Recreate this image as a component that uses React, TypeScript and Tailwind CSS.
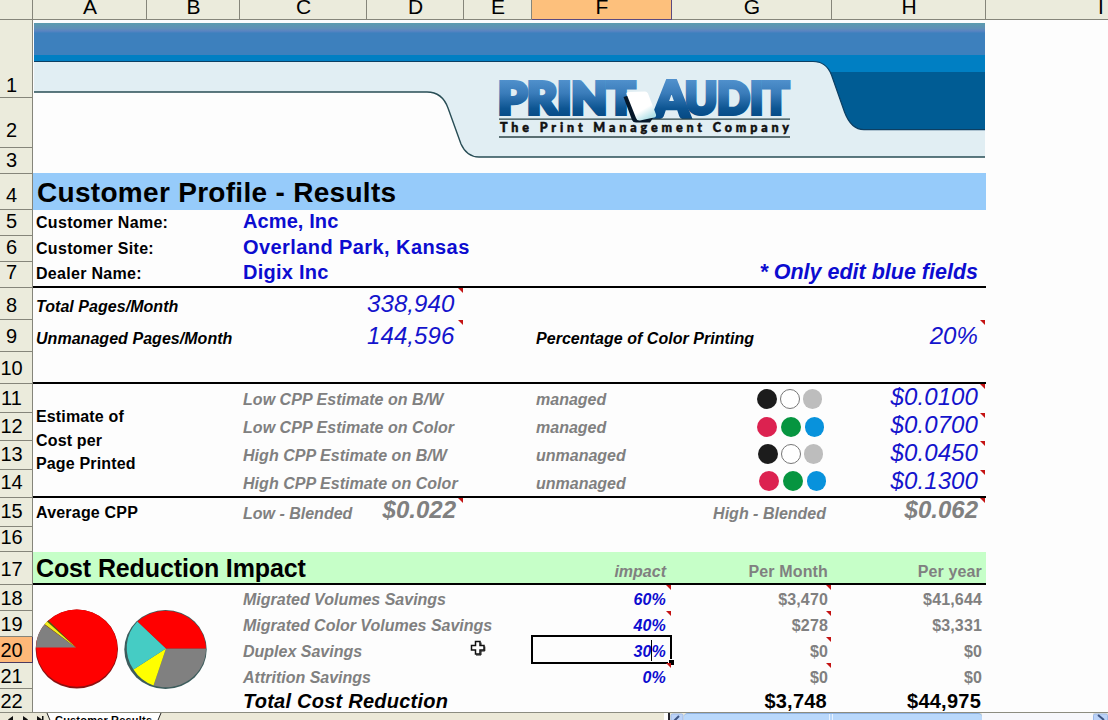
import { ReactNode } from 'react'
import clsx from 'clsx'

const COLUMNS = [
  { name: 'A', box: 'w-[114px]' },
  { name: 'B', box: 'w-[93px]' },
  { name: 'C', box: 'w-[127px]' },
  { name: 'D', box: 'w-[97px]' },
  { name: 'E', box: 'w-[68px]' },
  { name: 'F', box: 'w-[140px]' },
  { name: 'G', box: 'w-[160px]' },
  { name: 'H', box: 'w-[154px]' },
]

const GUTTER = [
  'h-[78px] pt-[55px]',
  'h-[50px] pt-[22px]',
  'h-[26px] pt-[2px]',
  'h-[36px] pt-[11px]',
  'h-[26px] pt-px',
  'h-[26px] pt-px',
  'h-[26px]',
  'h-[32px] pt-[7px]',
  'h-[32px] pt-[6px]',
  'h-[32px] pt-[6px]',
  'h-[29px] pt-[4px]',
  'h-[28px] pt-[3px]',
  'h-[29px] pt-[3px]',
  'h-[28px] pt-[2px]',
  'h-[29px] pt-[3px]',
  'h-[25px]',
  'h-[33px] pt-[7px]',
  'h-[26px] pt-[3px]',
  'h-[26px] pt-[3px]',
  'h-[26px] pt-[3px]',
  'h-[26px] pt-[3px]',
  'h-[24px] pt-[2px]',
]

// text styles
const label = 'text-[16px] font-bold tracking-[0.3px] text-black'
const labelItalic = 'text-[16px] font-bold italic tracking-[0.04px] text-black'
const customer = 'text-[20px] font-bold text-[#0c0cd0]'
const blueNumber = 'text-[24px] italic tracking-[0.1px] text-[#1414cc]'
const grayItalic = 'text-[16px] font-bold italic text-[#808080]'
const grayNumber = 'text-[16px] font-bold tracking-[0.15px] text-[#808080]'
const grayBig = 'text-[24px] font-bold italic text-[#808080]'
const impactBlue = 'text-[16px] font-bold italic tracking-[0.2px] text-[#0c0cd0]'
const total = 'text-[20px] font-bold tracking-[0.24px] text-black'

function Note() {
  return (
    <svg className="absolute top-0 right-px h-[5px] w-[5px]" viewBox="0 0 5 5">
      <path d="M0 0H5V5Z" fill="#c41414" />
    </svg>
  )
}

interface CellProps {
  col: number
  text?: string
  style?: string
  pad?: string
  right?: boolean
  note?: boolean
  children?: ReactNode
}

function Cell({ col, text, style, pad = 'pl-[3px]', right, note, children }: CellProps) {
  return (
    <div className={clsx('relative shrink-0 whitespace-nowrap', COLUMNS[col].box)}>
      <div className={clsx('text-[16px] leading-[18px]', right && 'text-right', pad)}>
        {text && <span className={clsx('leading-[0]', style)}>{text}</span>}
      </div>
      {note && <Note />}
      {children}
    </div>
  )
}

function Row({ className, children }: { className: string; children?: ReactNode }) {
  return <div className={clsx('flex shrink-0', className)}>{children}</div>
}

function Dots({ color, pad }: { color?: boolean; pad: string }) {
  return (
    <div className={clsx('absolute left-0 flex', pad)}>
      {color ? (
        <div className="flex gap-[4px]">
          <i className="h-5 w-5 rounded-full bg-[#dc2250]" />
          <i className="h-5 w-5 rounded-full bg-[#069540]" />
          <i className="-ml-[0.5px] h-5 w-[19px] rounded-full bg-[#0892dc]" />
        </div>
      ) : (
        <div className="flex gap-[3px]">
          <i className="h-5 w-5 rounded-full bg-[#1c1c1c]" />
          <i className="h-5 w-5 rounded-full border border-[#777] bg-white" />
          <i className="h-5 w-[19px] rounded-full bg-[#bdbdbd]" />
        </div>
      )}
    </div>
  )
}

function Banner() {
  return (
    <svg className="ml-px block h-[136px] w-[951px]" viewBox="34 23 951 136">
      <defs>
        <linearGradient id="top" x1="0" y1="0" x2="0" y2="1">
          <stop offset="0" stopColor="#5c9cae" />
          <stop offset="0.55" stopColor="#6090b8" />
          <stop offset="0.8" stopColor="#5a84c2" />
          <stop offset="1" stopColor="#3f80be" />
        </linearGradient>
        <linearGradient id="logo" gradientUnits="userSpaceOnUse" x1="0" y1="80" x2="0" y2="118">
          <stop offset="0" stopColor="#5090cc" />
          <stop offset="0.35" stopColor="#3a7cba" />
          <stop offset="0.75" stopColor="#0d5592" />
          <stop offset="1" stopColor="#064a84" />
        </linearGradient>
        <linearGradient id="pad" x1="0" y1="0" x2="0.6" y2="1">
          <stop offset="0.7" stopColor="#ffffff" />
          <stop offset="1" stopColor="#b4e2e8" />
        </linearGradient>
      </defs>
      <rect x="34" y="23" width="951" height="33" fill="#3d80bd" />
      <rect x="34" y="23" width="951" height="10" fill="url(#top)" />
      <rect x="34" y="55" width="951" height="17" fill="#007fc3" />
      <rect x="800" y="72" width="185" height="60" fill="#005c94" />
      <path
        d="M30 61.7H813C822 61.7 828 66 831.5 75L844.5 112C849 124 855 129.7 864 129.7H990V157H479C471 157 465 153 461 144L448 108C444 97 437 92 427 92H30Z"
        fill="#e1eef3"
      />
      <path d="M34 61.5H813C822 61.5 828 66 831.5 75L844.5 112C849 124 855 129.7 864 129.7H985" fill="none" stroke="#0c3f63" strokeWidth="1.2" />
      <path d="M34 92H427C437 92 444 97 448 108L461 144C465 153 471 157 479 157H985" fill="none" stroke="#284d55" strokeWidth="1.4" />
      <g fontFamily="Lato, sans-serif" fontWeight="900" fill="url(#logo)" stroke="url(#logo)">
        <text x="498" y="114" fontSize="43" strokeWidth="4.2" textLength="137" lengthAdjust="spacingAndGlyphs">PRINT</text>
        <text x="654" y="117" fontSize="50" strokeWidth="4.2" textLength="35" lengthAdjust="spacingAndGlyphs">A</text>
        <text x="685" y="114" fontSize="43" strokeWidth="4.2" textLength="104" lengthAdjust="spacingAndGlyphs">UDIT</text>
      </g>
      <path d="M499 119.2H790M499 137H790" stroke="#2c4448" strokeWidth="1.3" />
      <path d="M623.5 97L632 120Q633 122.500 636 122.500H650L653 118L630 95Z" fill="#06182a" />
      <path d="M626.500 94Q626 92 629 92L645 91.500Q647 91.500 648 93.500L656 114.500Q656.500 117 654 117.500L640 120.500Q637 121 636 118Z" fill="url(#pad)" />
      <text x="500" y="132" fontFamily="Lato, sans-serif" fontWeight="900" fontSize="12.500" fill="#111" stroke="#111" strokeWidth="0.5" textLength="289">
        The Print Management Company
      </text>
    </svg>
  )
}

function Pies() {
  return (
    <svg className="mt-[19px] ml-px block h-[88px] w-[180px]" viewBox="34 604 180 88">
      <ellipse cx="76.800" cy="649" rx="41.200" ry="39.500" fill="#8c1010" />
      <ellipse cx="76.800" cy="648.200" rx="40.600" ry="38.600" fill="#ff0000" />
      <path d="M76 647.500H36Q36.500 633 44.500 624.500Z" fill="#808080" />
      <path d="M76 647.500L44.500 624.500L48.500 620.500Z" fill="#4c5a10" />
      <path d="M76 647.500L44.500 624L47 621.500Z" fill="#f4ee20" />
      <ellipse cx="165.500" cy="649.500" rx="41.200" ry="39.500" fill="#3c5c5c" />
      <path d="M166 648.500L206 648.500A40.500 38.800 0 0 1 153.500 685.500Z" fill="#808080" />
      <path d="M166 648.500L153.500 685.500A40.500 38.800 0 0 1 133.500 669.500Z" fill="#ffff00" />
      <path d="M166 648.500L133.500 669.500A40.500 38.800 0 0 1 137.500 621.500Z" fill="#45ccc4" />
      <path d="M166 648.500L137.500 621.500A40.500 38.800 0 0 1 206 648.500Z" fill="#ff0000" />
    </svg>
  )
}

const estimates = [
  { name: 'Low CPP Estimate on B/W', kind: 'managed', value: '$0.0100', row: 'h-[29px]', pad: 'pt-[7px]', dots: 'top-[5px] pl-[85px]' },
  { name: 'Low CPP Estimate on Color', kind: 'managed', value: '$0.0700', row: 'h-[28px]', pad: 'pt-[6px]', dots: 'top-[4px] pl-[85px]', color: true },
  { name: 'High CPP Estimate on B/W', kind: 'unmanaged', value: '$0.0450', row: 'h-[29px]', pad: 'pt-[6px]', dots: 'top-[3px] pl-[86px]' },
  { name: 'High CPP Estimate on Color', kind: 'unmanaged', value: '$0.1300', row: 'h-[26px]', pad: 'pt-[5px]', dots: 'top-[1px] pl-[87px]', color: true },
]

const savings = [
  { name: 'Migrated Volumes Savings', impact: '60%', month: '$3,470', year: '$41,644' },
  { name: 'Migrated Color Volumes Savings', impact: '40%', month: '$278', year: '$3,331' },
  { name: 'Duplex Savings', impact: '30%', month: '$0', year: '$0', active: true },
  { name: 'Attrition Savings', impact: '0%', month: '$0', year: '$0' },
]

function ColumnHeaders() {
  return (
    <div className="flex h-5 shrink-0 border-b border-[#85857a] bg-[#ebebdc] text-[21px] leading-5">
      <div className="w-[33px] border-r border-[#85857a]" />
      {COLUMNS.map((c) => (
        <div
          key={c.name}
          className={clsx(
            'flex justify-center border-r',
            c.box,
            c.name === 'F' ? '-mb-px border-b border-[#5b4a80] bg-[#fdc07c]' : 'border-[#85857a]',
          )}
        >
          <span className="-mt-[3px] pl-px">{c.name}</span>
        </div>
      ))}
      <div className="-mt-[3px] flex-1 pl-[112px]">I</div>
    </div>
  )
}

function SheetTabs() {
  return (
    <div className="flex h-[8px] shrink-0 overflow-hidden border-t border-[#8c8c80] bg-[#ece9d8]">
      <svg className="h-[7px] w-[165px] shrink-0" viewBox="0 713 165 7">
        <path d="M47 713L52 725H155L161 713Z" fill="#fff" />
        <path d="M47 713L52 725M161 713L156 725" stroke="#222" fill="none" />
        <path d="M8 719.500L13 716V724ZM23 716L28 719.500L23 724ZM37 716L42 719.500L37 724ZM42 716H43.500V724H42Z" fill="#111" />
        <text x="55" y="723.500" fontFamily="Liberation Sans" fontWeight="bold" fontSize="11" textLength="97">
          Customer Results
        </text>
      </svg>
      <div className="flex-1" />
      <div className="w-[4px] bg-white" />
      <div className="w-[2px] bg-[#26262e]" />
      <svg className="h-[7px] w-[14px] shrink-0" viewBox="670 713 14 7">
        <rect x="671" y="714" width="12" height="10" rx="1.500" fill="#bcd3f8" stroke="#9db9e8" />
        <path d="M679 716L674 721" stroke="#3c5482" strokeWidth="2" />
      </svg>
      <div className="flex w-[298px] justify-center gap-[2px] rounded-t-sm border-t border-[#8fb4e4] bg-[#b9d8fb]">
        <i className="ml-[-4px] w-px bg-[#e6f2ff]" />
        <i className="w-px bg-[#e6f2ff]" />
      </div>
      <div className="w-[111px] bg-[#f6f7fb]" />
      <svg className="h-[7px] w-[15px] shrink-0" viewBox="1093 713 15 7">
        <rect x="1093.500" y="714" width="14" height="10" rx="1.500" fill="#bcd3f8" stroke="#9db9e8" />
        <path d="M1098 715L1104 720" stroke="#3c5482" strokeWidth="2" />
      </svg>
    </div>
  )
}

export default function App() {
  return (
    <div className="flex h-[720px] w-[1108px] flex-col overflow-hidden bg-[#fdfdfd] font-['Liberation_Sans',Arial,sans-serif] text-black">
      <ColumnHeaders />
      <div className="flex h-[692px] shrink-0 overflow-hidden">
        <div className="flex w-[33px] shrink-0 flex-col border-r border-[#85857a] bg-[#ebebdc] text-[20px] leading-5">
          {GUTTER.map((row, i) => (
            <div
              key={i}
              className={clsx(
                'shrink-0 border-b',
                row,
                i === 19 ? '-mr-px border-r border-[#4a3a60] bg-[#fdb878]' : 'border-[#85857a]',
              )}
            >
              <div className="flex w-[23px] justify-center">{i + 1}</div>
            </div>
          ))}
        </div>

        <div className="w-[953px] shrink-0">
          <div className="h-[153px] pt-[3px]">
            <Banner />
          </div>

          <Row className="h-[37px] bg-[#96cbfa]">
            <Cell col={0} text="Customer Profile - Results" style="text-[28px] font-bold tracking-[0.3px]" pad="pt-[15px] pl-[4px]" />
          </Row>
          <Row className="h-[26px]">
            <Cell col={0} text="Customer Name:" style={label} pad="pt-[4px] pl-[3px]" />
            <Cell col={1} />
            <Cell col={2} text="Acme, Inc" style={clsx(customer, 'tracking-[0.1px]')} pad="pt-[4px] pl-[3px]" />
          </Row>
          <Row className="h-[26px]">
            <Cell col={0} text="Customer Site:" style={label} pad="pt-[4px] pl-[3px]" />
            <Cell col={1} />
            <Cell col={2} text="Overland Park, Kansas" style={clsx(customer, 'tracking-[0.42px]')} pad="pt-[4px] pl-[3px]" />
          </Row>
          <Row className="h-[26px] border-b-2 border-black">
            <Cell col={0} text="Dealer Name:" style={label} pad="pt-[3px] pl-[3px]" />
            <Cell col={1} />
            <Cell col={2} text="Digix Inc" style={clsx(customer, 'tracking-[0.25px]')} pad="pt-[3px] pl-[3px]" />
            <div className="flex-1 pt-[3px] pr-[8px] text-right text-[16px] leading-[18px]">
              <span className="text-[21.5px] leading-[0] font-bold text-[#0c0cd0] italic">* Only edit blue fields</span>
            </div>
          </Row>
          <Row className="h-[32px]">
            <Cell col={0} text="Total Pages/Month" style={labelItalic} pad="pt-[10px] pl-[3px]" />
            <Cell col={1} />
            <Cell col={2} />
            <Cell col={3} text="338,940" style={blueNumber} right note pad="pt-[10px] pr-[15px]" />
          </Row>
          <Row className="h-[32px]">
            <Cell col={0} text="Unmanaged Pages/Month" style={labelItalic} pad="pt-[10px] pl-[3px]" />
            <Cell col={1} />
            <Cell col={2} />
            <Cell col={3} text="144,596" style={blueNumber} right note pad="pt-[10px] pr-[15px]" />
            <Cell col={4} />
            <Cell col={5} text="Percentage of Color Printing" style={labelItalic} pad="pt-[10px] pl-[4px]" />
            <Cell col={6} />
            <Cell col={7} text="20%" style={blueNumber} right note pad="pt-[10px] pr-[8px]" />
          </Row>
          <Row className="h-[32px] border-b-2 border-black" />

          <div className="flex h-[114px] border-b-2 border-black">
            <div className="w-[207px] shrink-0 pt-[21px] pl-[3px] text-[16px] leading-[23.5px] font-bold tracking-[0.15px]">
              Estimate of
              <br />
              Cost per
              <br />
              Page Printed
            </div>
            <div>
              {estimates.map((e) => (
                <Row key={e.name} className={e.row}>
                  <Cell col={2} text={e.name} style={clsx(grayItalic, 'tracking-[0.04px]')} pad={clsx('pl-[3px]', e.pad)} />
                  <Cell col={3} />
                  <Cell col={4} />
                  <Cell col={5} text={e.kind} style={grayItalic} pad={clsx('pl-[4px]', e.pad)} />
                  <Cell col={6}>
                    <Dots color={e.color} pad={e.dots} />
                  </Cell>
                  <Cell col={7} text={e.value} style={blueNumber} right note pad={clsx('pr-[8px]', e.pad)} />
                </Row>
              ))}
            </div>
          </div>

          <Row className="h-[29px]">
            <Cell col={0} text="Average CPP" style="text-[16px] font-bold tracking-[0.2px]" pad="pt-[6px] pl-[3px]" />
            <Cell col={1} />
            <Cell col={2} text="Low - Blended" style={grayItalic} pad="pt-[7px] pl-[3px]" />
            <Cell col={3} text="$0.022" style={grayBig} right note pad="pt-[6px] pr-[8px]" />
            <Cell col={4} />
            <Cell col={5} />
            <Cell col={6} text="High - Blended" style={grayItalic} right pad="pt-[7px] pr-[6px]" />
            <Cell col={7} text="$0.062" style={grayBig} right note pad="pt-[6px] pr-[8px]" />
          </Row>
          <Row className="h-[25px]" />
          <Row className="h-[33px] border-b-2 border-black bg-[#c6ffc8]">
            <Cell col={0} text="Cost Reduction Impact" style="text-[25px] font-bold tracking-[-0.12px]" pad="pt-[11px] pl-[3px]" />
            <Cell col={1} />
            <Cell col={2} />
            <Cell col={3} />
            <Cell col={4} />
            <Cell col={5} text="impact" style={grayItalic} right pad="pt-[11px] pr-[6px]" />
            <Cell col={6} text="Per Month" style={grayNumber} right pad="pt-[11px] pr-[4px]" />
            <Cell col={7} text="Per year" style={clsx(grayNumber, 'tracking-[0.3px]')} right pad="pt-[11px] pr-[4px]" />
          </Row>

          <div className="flex h-[104px]">
            <div className="w-[207px] shrink-0">
              <Pies />
            </div>
            <div>
              {savings.map((s) => (
                <Row key={s.name} className="h-[26px]">
                  <Cell col={2} text={s.name} style={grayItalic} pad="pt-[6px] pl-[3px]" />
                  <Cell col={3}>
                    {s.active && (
                      <svg className="absolute top-[3px] left-[103px] h-[16px] w-[16px]" viewBox="0 0 16 16">
                        <path d="M5.500 1.500H10V5.500H14V10H10V14H5.500V10H1.500V5.500H5.500Z" fill="#fff" stroke="#111" strokeWidth="1.500" />
                        <path d="M11 6V2.500M14.800 6.500V11H11V15H6" fill="none" stroke="#111" />
                      </svg>
                    )}
                  </Cell>
                  <Cell col={4} />
                  <Cell col={5} text={s.impact} style={impactBlue} right note={!s.active} pad="pt-[6px] pr-[6px]">
                    {s.active && (
                      <>
                        <div className="absolute -top-[2px] -left-px h-[29px] w-[141px] border-2 border-black" />
                        <div className="absolute top-[22px] left-[136px] h-[6px] w-[6px] border-t border-l border-white bg-black" />
                        <div className="absolute top-[3px] left-[119px] h-[21px] w-px bg-black" />
                      </>
                    )}
                  </Cell>
                  <Cell col={6} text={s.month} style={grayNumber} right note pad="pt-[6px] pr-[4px]" />
                  <Cell col={7} text={s.year} style={grayNumber} right pad="pt-[6px] pr-[4px]" />
                </Row>
              ))}
            </div>
          </div>

          <Row className="h-[24px]">
            <Cell col={0} />
            <Cell col={1} />
            <Cell col={2} text="Total Cost Reduction" style={clsx(total, 'italic')} pad="pt-[5px] pl-[3px]" />
            <Cell col={3} />
            <Cell col={4} />
            <Cell col={5} />
            <Cell col={6} text="$3,748" style={total} right pad="pt-[5px] pr-[5px]" />
            <Cell col={7} text="$44,975" style={total} right pad="pt-[5px] pr-[5px]" />
          </Row>
        </div>
      </div>
      <SheetTabs />
    </div>
  )
}
